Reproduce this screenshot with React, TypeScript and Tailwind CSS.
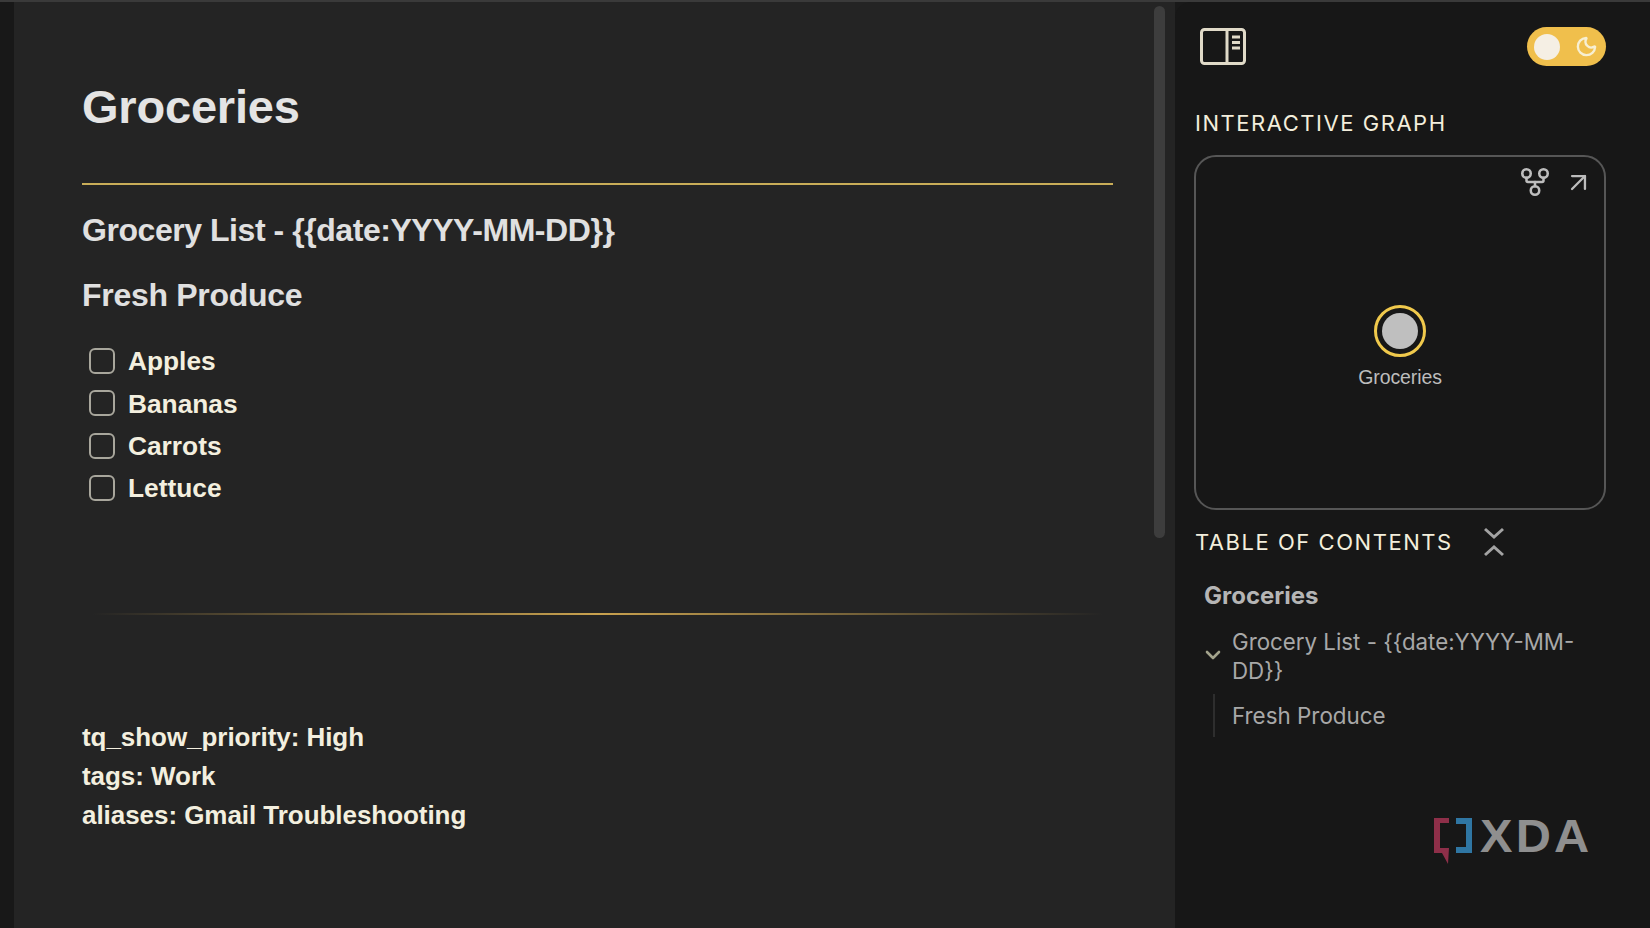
import React from 'react';
import { ArrowUpRight, ChevronDown, GitFork, Moon } from 'lucide-react';

const items = ['Apples', 'Bananas', 'Carrots', 'Lettuce'];
const props = ['tq_show_priority: High', 'tags: Work', 'aliases: Gmail Troubleshooting'];

const PanelIcon = () => (
  <svg width="46" height="37" viewBox="0 0 46 37" fill="none" stroke="#e0dac8" strokeWidth="3">
    <rect x="1.5" y="1.5" width="43" height="34" rx="3" />
    <path d="M27 1.5v34" />
    <path d="M32 9h8M32 14.5h8M32 20h8" strokeWidth="3" />
  </svg>
);

const CollapseIcon = () => (
  <svg width="22" height="30" viewBox="0 0 22 30" fill="none" stroke="#a3a3a3" strokeWidth="3">
    <path d="M2 2l9 8 9-8M2 28l9-8 9 8" />
  </svg>
);

const XdaMark = () => (
  <svg width="40" height="46" viewBox="0 0 40 46">
    <path d="M1 0h15v5H7v25h9l-1 16-6-11H1z" fill="#8e2f49" />
    <path d="M23 0h16v35H23v-6h10V6H23z" fill="#2f76a3" />
  </svg>
);

export default function App() {
  return (
    <div className="relative flex h-[928px] w-[1650px] overflow-hidden border-t-2 border-[#3a3a3a] bg-[#191919] font-['Liberation_Sans',sans-serif]">
      <div className="w-[14px] shrink-0 bg-[#181818]" />

      <main className="relative w-[1161px] shrink-0 bg-[#242424] pl-[68px] pr-[62px]">
        <h1 className="mt-[78px] text-[47px] font-bold leading-[54px] tracking-[-0.2px] text-[#e4e4e4]">Groceries</h1>
        <div className="mt-[49px] h-[2px] bg-[#c9ad58]" />
        <h2 className="mt-[24px] text-[32px] font-bold leading-[42px] tracking-[-0.45px] text-[#e0e0e0]">Grocery List - {'{{date:YYYY-MM-DD}}'}</h2>
        <h3 className="mt-[24px] text-[32px] font-bold leading-[40px] tracking-[-0.3px] text-[#e0e0e0]">Fresh Produce</h3>

        <ul className="mt-[25px] flex flex-col">
          {items.map((item) => (
            <li key={item} className="flex h-[42.3px] items-center gap-[13px] pl-[7px]">
              <span className="h-[26px] w-[26px] rounded-[6px] border-2 border-[#a8a69c]" />
              <span className="mt-[2px] text-[26.3px] font-bold text-[#f3efdf]">{item}</span>
            </li>
          ))}
        </ul>

        <div className="mx-[10px] mt-[104px] h-[2px] bg-gradient-to-r from-transparent via-[#c9a24f] to-transparent" />

        <div className="mt-[103px] flex flex-col">
          {props.map((line) => (
            <p key={line} className="text-[26px] font-bold leading-[39px] tracking-[-0.05px] text-[#f3efdf]">{line}</p>
          ))}
        </div>

        <div className="absolute right-[10px] top-[4px] h-[532px] w-[11px] rounded-full bg-[#3d3d3d]" />
      </main>

      <aside className="relative flex-1 rounded-tl-[16px] bg-[#171717] pl-[19px] pr-[44px] font-['Inter',sans-serif]">
        <div className="mt-[25px] flex items-center justify-between pl-[6px]">
          <PanelIcon />
          <div className="flex h-[39px] w-[79px] items-center justify-between rounded-full bg-[#f0bf4c] pl-[7px] pr-[8px]">
            <span className="h-[26px] w-[26px] rounded-full bg-[#f5efe4]" />
            <Moon size={23} color="#f7efd2" strokeWidth={2.5} />
          </div>
        </div>

        <h4 className="ml-[1px] mt-[42px] text-[22px] leading-[30px] tracking-[0.07em] text-[#f3eedc]">INTERACTIVE GRAPH</h4>

        <div className="mt-[17px] flex h-[355px] flex-col items-center rounded-[22px] border-2 border-[#565656]">
          <div className="flex w-full items-center justify-end gap-[11px] pr-[10px] pt-[8px] text-[#bdbdbd]">
            <GitFork size={34} strokeWidth={1.8} />
            <ArrowUpRight size={31} strokeWidth={1.8} />
          </div>
          <div className="mt-[106px] flex h-[52px] w-[52px] items-center justify-center rounded-full border-[3px] border-[#f0c94c]">
            <span className="h-[36px] w-[36px] rounded-full bg-[#bfbfbf]" />
          </div>
          <span className="mt-[8px] font-['Liberation_Sans',sans-serif] text-[19.5px] leading-[24px] tracking-[-0.1px] text-[#bdbdbd]">Groceries</span>
        </div>

        <div className="ml-[1px] mt-[17px] flex items-center gap-[30px]">
          <h4 className="text-[22px] leading-[30px] tracking-[0.07em] text-[#f3eedc]">TABLE OF CONTENTS</h4>
          <CollapseIcon />
        </div>

        <p className="ml-[10px] mt-[23px] text-[24px] font-bold leading-[32px] text-[#b5b5b5]">Groceries</p>

        <div className="ml-[11px] mt-[15px] flex items-center">
          <ChevronDown size={24} color="#a3a38c" strokeWidth={2.6} className="ml-[-4px] mt-[-2px] shrink-0" />
          <p className="ml-[7px] text-[22.3px] leading-[29px] text-[#a8a8a8]">Grocery List - {'{{date:YYYY-MM-'}<br />{'DD}}'}</p>
        </div>

        <div className="ml-[19px] mt-[9px] flex h-[43px] items-center border-l-2 border-[#2e2e2e]">
          <p className="ml-[17px] text-[22.4px] leading-[29px] text-[#a8a8a8]">Fresh Produce</p>
        </div>

        <div className="absolute left-[258px] top-[816px] flex items-start gap-[7px]">
          <XdaMark />
          <span className="origin-left scale-x-[1.06] font-['Liberation_Sans',sans-serif] text-[46px] font-bold leading-[36px] tracking-[3px] text-[#8f8f8f]">XDA</span>
        </div>
      </aside>
    </div>
  );
}
